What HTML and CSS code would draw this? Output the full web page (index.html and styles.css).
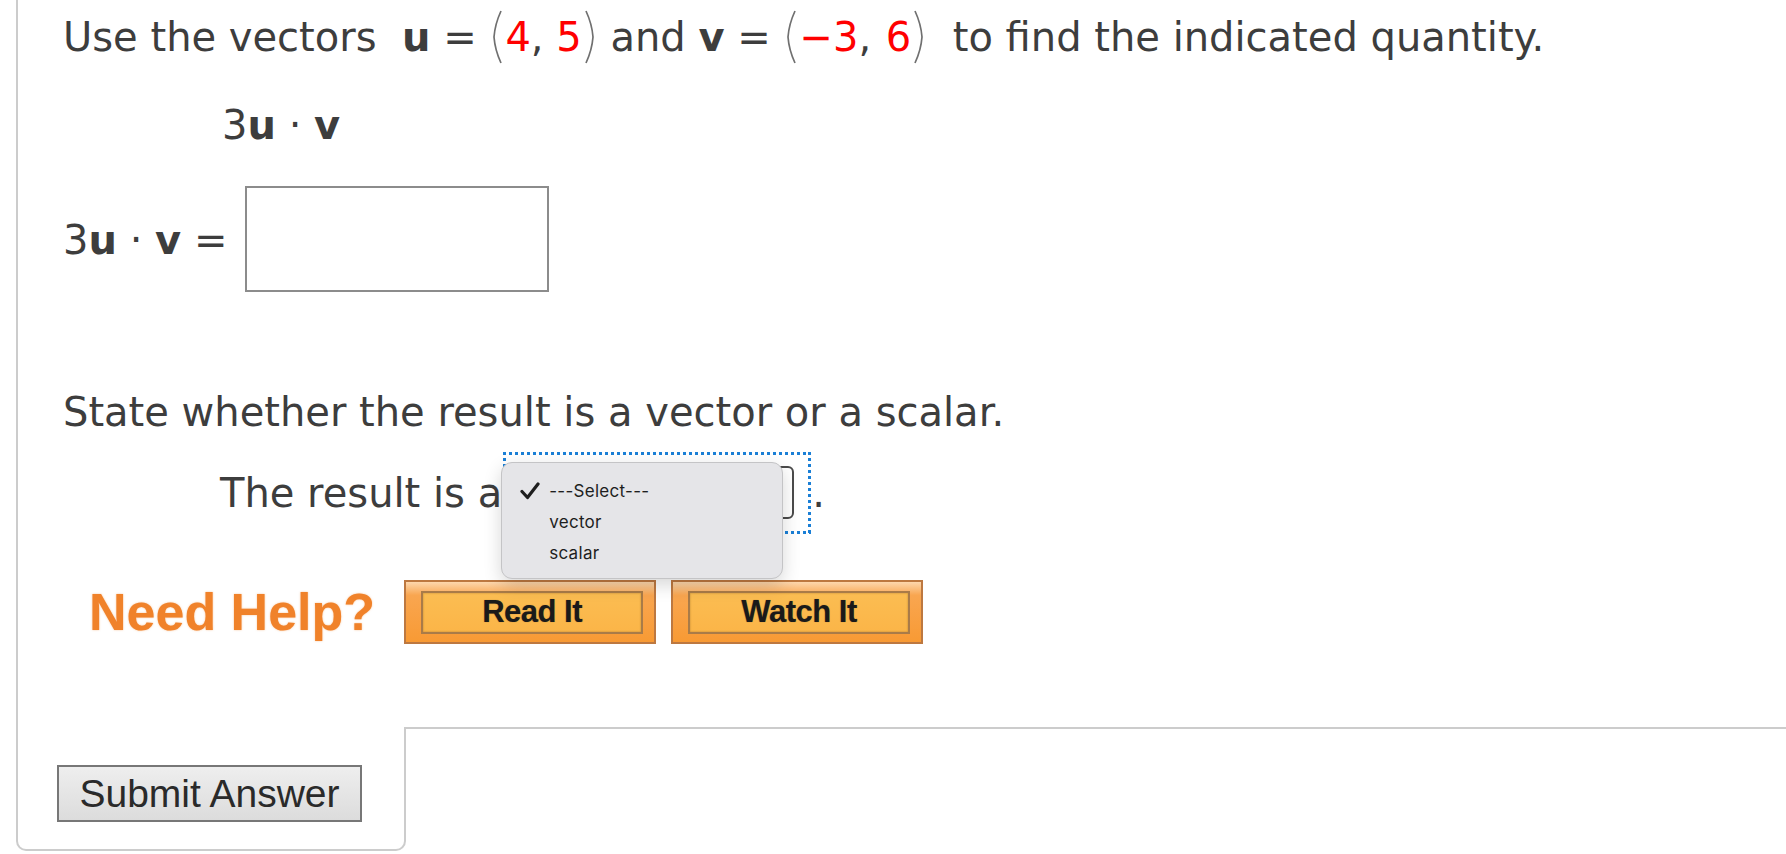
FILE: index.html
```html
<!DOCTYPE html>
<html>
<head>
<meta charset="utf-8">
<title>Vectors</title>
<link rel="stylesheet" href="styles.css">
</head>
<body>
<div class="content">
  <p class="line l1">Use the vectors&nbsp; <b>u</b> = <svg class="br" viewBox="0 0 14 54"><path d="M11,1 Q5,14 4,27 Q5,40 11,53"/></svg><span class="red">4</span>, <span class="red">5</span><svg class="br" viewBox="0 0 14 54"><path d="M3,1 Q9,14 10,27 Q9,40 3,53"/></svg> and <b>v</b> = <svg class="br" viewBox="0 0 14 54"><path d="M11,1 Q5,14 4,27 Q5,40 11,53"/></svg><span class="red">&minus;3</span>,<span class="sp"></span> <span class="red">6</span><svg class="br" viewBox="0 0 14 54"><path d="M3,1 Q9,14 10,27 Q9,40 3,53"/></svg>&nbsp; to find the indicated quantity.</p>
  <p class="line expr">3<b>u</b> &middot; <b>v</b></p>
  <div class="answer">
    <span class="line label">3<b>u</b> &middot; <b>v</b> =</span>
    <span class="box"></span>
  </div>
  <p class="line state">State whether the result is a vector or a scalar.</p>
  <div class="result">
    <span class="line">The result is a</span>
    <span class="focus">
      <span class="select"></span>
      <span class="popup">
        <span class="opt"><svg class="check" viewBox="0 0 20 18"><polyline points="2,9.5 7.5,15.5 18,2"/></svg>---Select---</span>
        <span class="opt">vector</span>
        <span class="opt">scalar</span>
      </span>
    </span>
    <span class="line dot">.</span>
  </div>
  <div class="help">
    <span class="needhelp">Need Help?</span>
    <span class="hbtn"><span class="hin">Read It</span></span>
    <span class="hbtn"><span class="hin">Watch It</span></span>
  </div>
</div>
<div class="footer">
  <div class="tab"><button class="submit">Submit Answer</button></div>
  <div class="rest"></div>
</div>
</body>
</html>
```
FILE: styles.css
```css
html, body {
  margin: 0;
  padding: 0;
  background: #fff;
}
body {
  width: 1786px;
  height: 854px;
  overflow: hidden;
  font-family: "DejaVu Sans", Verdana, sans-serif;
  font-size: 40px;
  color: #3d3d3d;
}
.content {
  box-sizing: border-box;
  height: 727px;
  margin-left: 16px;
  border-left: 2px solid #cccccc;
  padding-left: 45px;
  padding-top: 10px;
}
.line {
  line-height: 48px;
  margin: 0;
  white-space: nowrap;
}
b { font-weight: bold; }
.red { color: #ff0000; }
.sp {
  display: inline-block;
  width: 2px;
}
.br {
  width: 14px;
  height: 54px;
  margin: 0 1px;
  vertical-align: -13px;
}
.br path {
  fill: none;
  stroke: #707070;
  stroke-width: 1.7;
}
.expr {
  margin-top: 37px;
  padding-left: 159px;
}
.answer {
  display: flex;
  align-items: flex-start;
  margin-top: 37px;
}
.answer .label {
  margin-top: 30px;
}
.box {
  display: block;
  box-sizing: border-box;
  width: 304px;
  height: 106px;
  border: 2px solid #8c8c8c;
  margin-left: 18px;
  background: #fff;
}
.state {
  margin-top: 96px;
}
.result {
  display: flex;
  align-items: center;
  margin-top: 16px;
  padding-left: 157px;
  height: 82px;
}
.focus {
  position: relative;
  display: block;
  box-sizing: border-box;
  width: 308px;
  height: 82px;
  margin-left: 1px;
  padding: 14px 17px 0 17px;
  background:
    repeating-linear-gradient(to right, #1a7fd6 0 3px, transparent 3px 6px) top left / 100% 3px no-repeat,
    repeating-linear-gradient(to right, #1a7fd6 0 3px, transparent 3px 6px) bottom left / 100% 3px no-repeat,
    repeating-linear-gradient(to bottom, #1a7fd6 0 3px, transparent 3px 6px) top left / 3px 100% no-repeat,
    repeating-linear-gradient(to bottom, #1a7fd6 0 3px, transparent 3px 6px) top right / 3px 100% no-repeat;
}
.select {
  display: block;
  box-sizing: border-box;
  width: 274px;
  height: 53px;
  border: 2px solid #4a4a4a;
  border-radius: 6px;
  background: #fff;
}
.popup {
  position: absolute;
  left: -2px;
  top: 10px;
  box-sizing: border-box;
  width: 282px;
  height: 117px;
  background: #e5e5e8;
  border: 1px solid #c4c4c6;
  border-radius: 11px;
  box-shadow: 0 6px 18px rgba(0, 0, 0, 0.16);
  padding-top: 13px;
  font-family: Inter, "Liberation Sans", sans-serif;
  font-size: 17px;
  color: #1e1e1e;
}
.opt {
  position: relative;
  display: block;
  height: 31px;
  line-height: 31px;
  padding-left: 47px;
  letter-spacing: 0.3px;
}
.check {
  position: absolute;
  left: 18px;
  top: 6px;
  width: 20px;
  height: 18px;
}
.check polyline {
  fill: none;
  stroke: #1e1e1e;
  stroke-width: 3.2;
  stroke-linecap: round;
  stroke-linejoin: round;
}
.dot {
  margin-left: 1px;
}
.help {
  display: flex;
  align-items: flex-start;
  margin-top: 46px;
  padding-left: 26px;
  height: 64px;
}
.needhelp {
  font-family: "Liberation Sans", Arial, sans-serif;
  font-weight: bold;
  font-size: 52px;
  line-height: 64px;
  color: #f0822a;
  text-shadow: 0 0 2px rgba(240, 130, 42, 0.5);
  margin-right: 29px;
  white-space: nowrap;
}
.hbtn {
  display: block;
  box-sizing: border-box;
  width: 252px;
  height: 64px;
  margin-right: 15px;
  border: 2px solid #bd7840;
  background: linear-gradient(to bottom, #fdd7ad 0%, #f9a650 22%, #f89a34 100%);
  padding: 9px 11px 8px 15px;
}
.hin {
  display: block;
  box-sizing: border-box;
  height: 100%;
  border: 2px solid #a97b48;
  box-shadow: inset 0 0 2px rgba(120, 80, 30, 0.5);
  background: linear-gradient(to bottom, #fbbd52, #fbb548);
  font-family: "Liberation Sans", Arial, sans-serif;
  font-weight: bold;
  font-size: 31px;
  line-height: 38px;
  text-align: center;
  color: #1a1a1a;
  letter-spacing: -0.5px;
  text-shadow: 0 0 1px rgba(0, 0, 0, 0.4);
}
.footer {
  display: flex;
  height: 124px;
}
.tab {
  box-sizing: border-box;
  width: 390px;
  margin-left: 16px;
  border: 2px solid #cccccc;
  border-top: none;
  border-radius: 0 0 10px 10px;
  padding-top: 38px;
  padding-left: 39px;
}
.rest {
  flex: 1;
  border-top: 2px solid #cccccc;
}
.submit {
  display: block;
  box-sizing: border-box;
  width: 305px;
  height: 57px;
  margin: 0;
  padding: 0;
  border: 2px solid #777777;
  border-radius: 0;
  background: linear-gradient(to bottom, #eeeeee, #dcdcdc);
  font-family: "Liberation Sans", Arial, sans-serif;
  font-size: 39px;
  color: #2a2a2a;
  text-align: center;
  line-height: 51px;
}
```
